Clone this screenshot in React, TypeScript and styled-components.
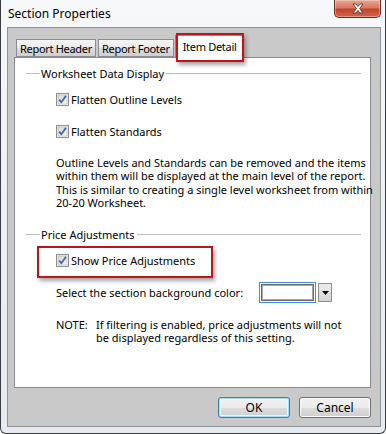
import React from 'react';
import styled, { createGlobalStyle } from 'styled-components';

const GlobalStyle = createGlobalStyle`
  html, body {
    margin: 0;
    padding: 0;
    background: #ffffff;
  }
  body {
    font-family: 'Noto Sans', 'Open Sans', sans-serif;
    font-size: 11px;
    color: #000;
  }
`;

const Window = styled.div`
  box-sizing: border-box;
  width: 386px;
  height: 434px;
  display: flex;
  flex-direction: column;
  padding: 0 4px 6px 6px;
  background: linear-gradient(180deg, #f7f8fa 0%, #eef1f5 40%, #e6ebf0 100%);
  border-left: 1px solid #3a3d42;
  border-right: 1px solid #3a3d42;
  border-bottom: 1px solid #3a3d42;
  border-radius: 0 0 6px 6px;
`;

const TitleBar = styled.div`
  height: 27px;
  display: flex;
  align-items: flex-start;
  justify-content: space-between;
`;

const Title = styled.div`
  padding: 5px 0 0 1px;
  font-size: 12px;
  color: #000;
`;

const CloseButton = styled.div`
  width: 47px;
  height: 18px;
  display: flex;
  align-items: center;
  justify-content: center;
  box-sizing: border-box;
  border: 1px solid #6b2a1f;
  border-top: none;
  border-radius: 0 0 5px 5px;
  background: linear-gradient(180deg, #e8a493 0%, #d77a63 45%, #c2432b 55%, #d2664a 100%);
  box-shadow: inset 0 0 0 1px rgba(255, 255, 255, 0.35);
`;

const Client = styled.div`
  flex: 1;
  display: flex;
  flex-direction: column;
  box-sizing: border-box;
  padding: 7px 9px 8px 6px;
  background: #c9c9c9;
  border: 1px solid #8f949b;
`;

const TabStrip = styled.div`
  height: 22px;
  display: flex;
  align-items: flex-end;
  padding-left: 2px;
  position: relative;
  z-index: 1;
`;

const Tab = styled.div<{ $active?: boolean }>`
  position: relative;
  box-sizing: border-box;
  height: ${(p) => (p.$active ? '23px' : '18px')};
  margin-bottom: ${(p) => (p.$active ? '-1px' : '0')};
  margin-right: ${(p) => (p.$active ? '0' : '2px')};
  margin-left: ${(p) => (p.$active ? '-1px' : '0')};
  padding: ${(p) => (p.$active ? '3px 7px 0' : '1px 3px 0')};
  border: 1px solid #898c95;
  border-bottom: ${(p) => (p.$active ? 'none' : '1px solid #898c95')};
  background: ${(p) =>
    p.$active ? '#ffffff' : 'linear-gradient(180deg, #f4f4f4 0%, #ebebeb 50%, #dddddd 51%, #cfcfcf 100%)'};
  font-size: 11px;
  letter-spacing: -0.3px;
  line-height: 15px;
  white-space: nowrap;
`;

const Highlight = styled.div`
  position: absolute;
  box-sizing: border-box;
  border: 2px solid #c0141b;
  box-shadow: 2px 3px 4px rgba(0, 0, 0, 0.35);
  pointer-events: none;
`;

const TabHighlight = styled(Highlight)`
  left: 0px;
  right: -1px;
  top: -3px;
  bottom: -4px;
`;

const Panel = styled.div`
  height: 331px;
  box-sizing: border-box;
  background: #ffffff;
  border: 1px solid #898c95;
  padding: 7px 9px 0 11px;
  display: flex;
  flex-direction: column;
`;

const Legend = styled.div<{ $top: number }>`
  display: flex;
  align-items: center;
  height: 16px;
  margin-top: ${(p) => p.$top}px;
  &::before {
    content: '';
    width: 14px;
    border-top: 1px solid #bcbcbc;
    margin-right: 1px;
  }
  &::after {
    content: '';
    flex: 1;
    border-top: 1px solid #bcbcbc;
    margin-left: 2px;
  }
`;

const Indented = styled.div<{ $top: number }>`
  margin-left: 30px;
  margin-top: ${(p) => p.$top}px;
  position: relative;
`;

const CheckRow = styled.label`
  display: flex;
  align-items: center;
  gap: 2px;
  height: 16px;
  width: max-content;
`;

const Paragraph = styled.p`
  margin: 0;
  line-height: 13.4px;
  white-space: nowrap;
`;

const ShowHighlight = styled(Highlight)`
  left: -19px;
  top: -7px;
  width: 176px;
  height: 32px;
`;

const ColorRow = styled.div`
  display: flex;
  align-items: center;
  height: 20px;
`;

const ColorLabel = styled.span`
  width: 203px;
`;

const SwatchFrame = styled.div`
  box-sizing: border-box;
  width: 57px;
  height: 21px;
  padding: 1px;
  border: 1px solid #3f8fe3;
`;

const Swatch = styled.div`
  box-sizing: border-box;
  height: 100%;
  background: #ffffff;
  border: 1px solid #6a6a6a;
  box-shadow: inset 0 0 0 1px #a9a9a9;
`;

const DropButton = styled.div`
  box-sizing: border-box;
  width: 14px;
  height: 19px;
  margin-left: 2px;
  display: flex;
  align-items: center;
  justify-content: center;
  border: 1px solid #8d8d8d;
  background: linear-gradient(180deg, #ececec 0%, #d6d6d6 100%);
`;

const NoteGrid = styled.div`
  display: grid;
  grid-template-columns: 40px auto;
  line-height: 13.5px;
  white-space: nowrap;
`;

const ButtonRow = styled.div`
  display: flex;
  justify-content: flex-end;
  gap: 9px;
  margin-top: 9px;
`;

const DialogButton = styled.button<{ $default?: boolean }>`
  box-sizing: border-box;
  width: 72px;
  height: 21px;
  padding: 0;
  font-family: 'Noto Sans', 'Open Sans', sans-serif;
  font-size: 12px;
  color: #000;
  border-radius: 3px;
  border: 1px solid ${(p) => (p.$default ? '#3c7fb1' : '#707070')};
  background: linear-gradient(180deg, #f2f2f2 0%, #ebebeb 50%, #dddddd 51%, #cfcfcf 100%);
  box-shadow: ${(p) =>
    p.$default ? 'inset 0 0 0 1px #a6dcf7, inset 0 0 0 2px #eaf6fd' : 'inset 0 0 0 1px #fcfcfc'};
`;

const CheckBox: React.FC = () => (
  <svg width="13" height="13" viewBox="0 0 13 13">
    <defs>
      <linearGradient id="cbFill" x1="0" y1="0" x2="1" y2="1">
        <stop offset="0" stopColor="#d9d9d9" />
        <stop offset="1" stopColor="#f6f6f6" />
      </linearGradient>
    </defs>
    <rect x="0.5" y="0.5" width="12" height="12" fill="#f4f4f4" stroke="#8f8f8f" />
    <rect x="2" y="2" width="9" height="9" fill="url(#cbFill)" stroke="#b4b4b4" strokeWidth="0.6" />
    <path d="M3.2 6.6 L5.3 9.2 L9.9 2.9" fill="none" stroke="#4b66a6" strokeWidth="1.8" strokeLinejoin="round" />
  </svg>
);

const CloseGlyph: React.FC = () => (
  <svg width="14" height="11" viewBox="0 0 14 11">
    <path
      d="M2 1 L5 1 L7 3.6 L9 1 L12 1 L8.6 5.5 L12 10 L9 10 L7 7.4 L5 10 L2 10 L5.4 5.5 Z"
      fill="#ffffff"
      stroke="#5a2a22"
      strokeWidth="0.8"
      strokeLinejoin="round"
    />
  </svg>
);

const App: React.FC = () => {
  return (
    <>
      <GlobalStyle />
      <Window>
        <TitleBar>
          <Title>Section Properties</Title>
          <CloseButton>
            <CloseGlyph />
          </CloseButton>
        </TitleBar>
        <Client>
          <TabStrip>
            <Tab>Report Header</Tab>
            <Tab>Report Footer</Tab>
            <Tab $active>
              Item Detail
              <TabHighlight />
            </Tab>
          </TabStrip>
          <Panel>
            <Legend $top={0}>Worksheet Data Display</Legend>
            <Indented $top={10}>
              <CheckRow>
                <CheckBox />
                Flatten Outline Levels
              </CheckRow>
            </Indented>
            <Indented $top={16}>
              <CheckRow>
                <CheckBox />
                Flatten Standards
              </CheckRow>
            </Indented>
            <Indented $top={17}>
              <Paragraph>
                Outline Levels and Standards can be removed and the items
                <br />
                within them will be displayed at the main level of the report.
                <br />
                This is similar to creating a single level worksheet from within
                <br />
                20-20 Worksheet.
              </Paragraph>
            </Indented>
            <Legend $top={17}>Price Adjustments</Legend>
            <Indented $top={10}>
              <ShowHighlight />
              <CheckRow>
                <CheckBox />
                Show Price Adjustments
              </CheckRow>
            </Indented>
            <Indented $top={14}>
              <ColorRow>
                <ColorLabel>Select the section background color:</ColorLabel>
                <SwatchFrame>
                  <Swatch />
                </SwatchFrame>
                <DropButton>
                  <svg width="7" height="4" viewBox="0 0 7 4">
                    <path d="M0 0 L7 0 L3.5 4 Z" fill="#000" />
                  </svg>
                </DropButton>
              </ColorRow>
            </Indented>
            <Indented $top={15}>
              <NoteGrid>
                <span>NOTE:</span>
                <span>
                  If filtering is enabled, price adjustments will not
                  <br />
                  be displayed regardless of this setting.
                </span>
              </NoteGrid>
            </Indented>
          </Panel>
          <ButtonRow>
            <DialogButton $default>OK</DialogButton>
            <DialogButton>Cancel</DialogButton>
          </ButtonRow>
        </Client>
      </Window>
    </>
  );
};

export default App;
